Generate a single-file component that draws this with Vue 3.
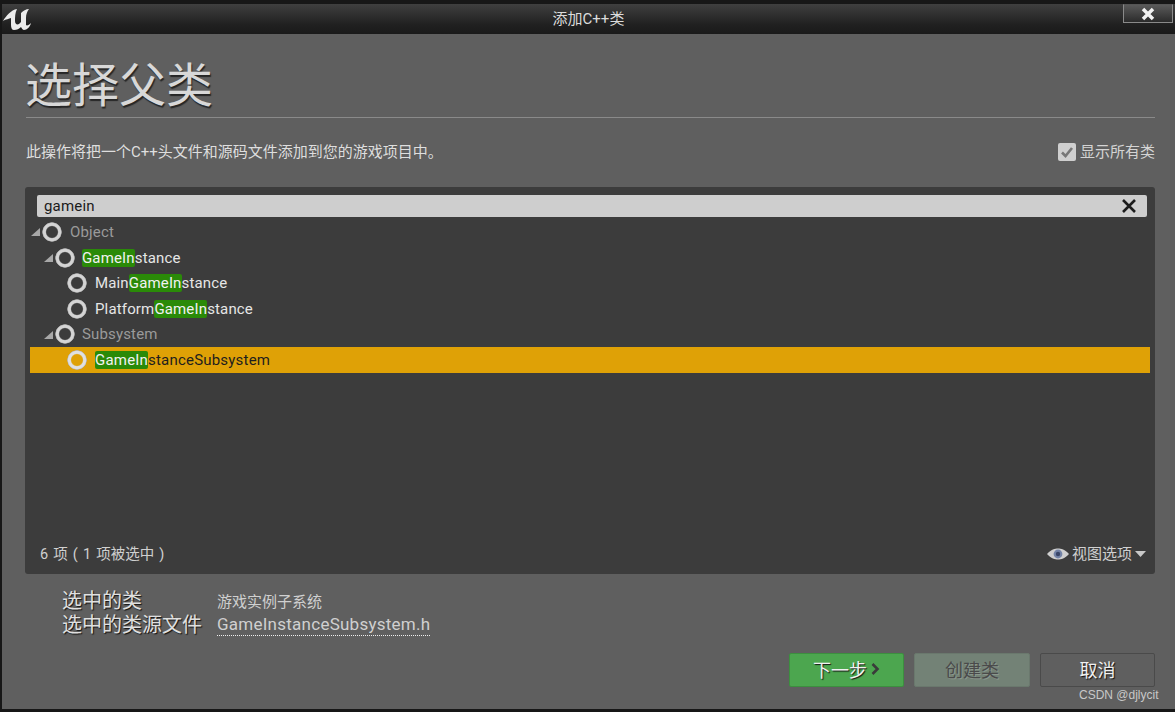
<script setup>
const rows = [
  { depth: 0, arrow: true, parts: [['Object', false]], dim: true },
  { depth: 1, arrow: true, parts: [['GameIn', true], ['stance', false]] },
  { depth: 2, parts: [['Main', false], ['GameIn', true], ['stance', false]] },
  { depth: 2, parts: [['Platform', false], ['GameIn', true], ['stance', false]] },
  { depth: 1, arrow: true, parts: [['Subsystem', false]], dim: true },
  { depth: 2, parts: [['GameIn', true], ['stanceSubsystem', false]], selected: true },
]
</script>

<template>
  <div class="window">
    <header class="titlebar">
      <svg class="logo" width="32" height="32" viewBox="2 4 32 32">
        <path d="M3 21C6 16 11 10 17 9C15 13 15 17 15 21C15 24 17 25 19 24L21 22L21 13C23 11 26 9 29 9C27 12 26 14 26 18L26 25C27 26 29 25 31 23C30 27 27 30 24 30C23 30 22 29 21 27C19 29 17 30 14 30C12 30 11 28 11 25L11 18C9 19 6 19 3 21Z" fill="#ececec"/>
      </svg>
      <span class="wintitle">添加C++类</span>
      <button class="close" type="button">
        <svg width="14" height="14" viewBox="0 0 14 14"><path d="M2 2L12 12M12 2L2 12" stroke="#f2f2f2" stroke-width="3.5"/></svg>
      </button>
    </header>

    <main class="body">
      <h1 class="heading">选择父类</h1>
      <div class="rule"></div>
      <div class="desc-row">
        <p class="desc">此操作将把一个C++头文件和源码文件添加到您的游戏项目中。</p>
        <label class="show-all">
          <span class="check">
            <svg width="14" height="12" viewBox="0 0 14 12"><path d="M2 6.5L5.5 10L12 2" fill="none" stroke="#777" stroke-width="2.6"/></svg>
          </span>
          显示所有类
        </label>
      </div>

      <section class="panel">
        <div class="search">
          <span>gamein</span>
          <svg width="16" height="16" viewBox="0 0 16 16"><path d="M2 2L14 14M14 2L2 14" stroke="#1c1c1c" stroke-width="2.6"/></svg>
        </div>
        <div class="tree">
          <div v-for="(r, i) in rows" :key="i" class="row" :class="{ selected: r.selected, dim: r.dim }">
            <div class="indent" :class="'d' + r.depth">
              <svg v-if="r.arrow" class="arrow" width="9" height="8" viewBox="0 0 9 8"><path d="M9 0V8H0Z" fill="#a8a8a8"/></svg>
            </div>
            <span class="ring"></span>
            <span class="label" :class="'m' + r.depth">
              <span v-for="(p, j) in r.parts" :key="j" :class="{ hit: p[1] }">{{ p[0] }}</span>
            </span>
          </div>
        </div>
        <div class="status">
          <span class="count">6 项 ( 1 项被选中 )</span>
          <span class="view">
            <svg width="22" height="12" viewBox="0 0 22 12">
              <path d="M0 6C4 1.5 8 0.5 11 0.5C14 0.5 18 1.5 22 6C18 10.5 14 11.5 11 11.5C8 11.5 4 10.5 0 6Z" fill="#cfcfcf"/>
              <circle cx="11" cy="6" r="4.4" fill="#7484a8"/>
              <circle cx="11" cy="6" r="2.2" fill="#3a4668"/>
            </svg>
            视图选项
            <svg width="11" height="6" viewBox="0 0 11 6"><path d="M0 0H11L5.5 6Z" fill="#c8c8c8"/></svg>
          </span>
        </div>
      </section>

      <section class="details">
        <div class="dt">选中的类</div>
        <div class="dd small">游戏实例子系统</div>
        <div class="dt">选中的类源文件</div>
        <div class="dd link">GameInstanceSubsystem.h</div>
      </section>

      <footer class="actions">
        <button class="btn next" type="button">下一步
          <svg width="9" height="12" viewBox="0 0 9 12"><path d="M1.5 1L6.5 6L1.5 11" fill="none" stroke="#3a3a3a" stroke-width="2.6"/></svg>
        </button>
        <button class="btn create" type="button">创建类</button>
        <button class="btn cancel" type="button">取消</button>
      </footer>
    </main>
    <span class="mark">CSDN @djlycit</span>
  </div>
</template>

<style>
html, body { margin: 0; background: #161616; overflow: hidden; }
</style>

<style scoped>
* { box-sizing: border-box; }
.window {
  position: relative;
  width: 1175px;
  height: 712px;
  padding: 4px 0 3px 2px;
  display: flex;
  flex-direction: column;
  background: #171717;
  font-family: Roboto, "Noto Sans CJK SC", sans-serif;
  color: #d6d6d6;
}
.titlebar {
  height: 30px;
  flex: none;
  display: flex;
  align-items: flex-start;
  justify-content: center;
  position: relative;
  background: linear-gradient(#3f3f3f, #202020 70%, #1a1a1a);
}
.logo { position: absolute; left: 0; top: 0; }
.wintitle { font-size: 15px; line-height: 30px; color: #dcdcdc; }
.close {
  position: absolute;
  right: 2px;
  top: 0;
  width: 50px;
  height: 19px;
  padding: 0;
  display: flex;
  align-items: center;
  justify-content: center;
  background: linear-gradient(#5a5a5a, #2b2b2b);
  border: 1px solid #8a8a8a;
  border-top-color: #555;
  border-radius: 0;
}
.body {
  flex: 1;
  min-height: 0;
  display: flex;
  flex-direction: column;
  padding: 0 20px 22px 23px;
  background: #5f5f5f;
}
.heading {
  margin: 22px 0 0 0;
  height: 60px;
  font-size: 47px;
  line-height: 60px;
  font-weight: 400;
  color: #d8d8d8;
  text-shadow: 1px 2px 1px #262626;
}
.rule { height: 1px; margin: 1px 0 0 1px; background: #8a8a8a; }
.desc-row {
  height: 69px;
  display: flex;
  justify-content: space-between;
  align-items: flex-start;
  padding: 24px 0 0 1px;
}
.desc { margin: 0; font-size: 15px; line-height: 20px; color: #dedede; }
.show-all {
  display: flex;
  align-items: center;
  gap: 4px;
  font-size: 15px;
  line-height: 20px;
  color: #d4d4d4;
}
.check {
  width: 18px;
  height: 18px;
  display: flex;
  align-items: center;
  justify-content: center;
  background: #cfcfcf;
  border-radius: 2px;
}
.panel {
  height: 387px;
  flex: none;
  display: flex;
  flex-direction: column;
  padding: 8px 5px 0;
  background: #3c3c3c;
  border-radius: 3px;
}
.search {
  flex: none;
  height: 22px;
  margin: 0 3px 0 7px;
  padding: 0 10px 0 7px;
  display: flex;
  align-items: center;
  justify-content: space-between;
  background: #cecece;
  border-radius: 2px;
  color: #1b1b1b;
  font-size: 15px;
  letter-spacing: 0.2px;
}
.tree { flex: 1; padding-top: 2.2px; }
.row {
  height: 25.6px;
  display: flex;
  align-items: center;
  font-size: 15px;
  letter-spacing: 0.15px;
  color: #e6e6e6;
}
.row.dim { color: #9a9a9a; }
.row.selected { background: #dfa106; color: #1e1e1e; letter-spacing: 0.2px; }
.indent { position: relative; flex: none; height: 100%; }
.d0 { width: 12px; }
.d1 { width: 25px; }
.d2 { width: 37px; }
.arrow { position: absolute; right: 2px; top: 9px; }
.ring {
  flex: none;
  width: 20px;
  height: 20px;
  border-radius: 50%;
  background: radial-gradient(circle closest-side, transparent 5.4px, #d4d4d4 6.6px, #d4d4d4 8.6px, #a0a0a0 9.6px, transparent 10px);
}
.row.selected .ring {
  background: radial-gradient(circle closest-side, transparent 5.4px, #e0e0e0 6.6px, #e0e0e0 8.6px, #b8b8b8 9.6px, transparent 10px);
}
.label { white-space: nowrap; }
.m0, .m2 { margin-left: 8px; }
.m1 { margin-left: 7px; }
.hit {
  display: inline-block;
  background: #2a8a08;
  border-radius: 2px;
  line-height: 18px;
  color: #f2f2f2;
}
.status {
  flex: none;
  height: 30px;
  display: flex;
  justify-content: space-between;
  align-items: flex-start;
  padding: 0 4px 0 10px;
  font-size: 15px;
  line-height: 20px;
  color: #d0d0d0;
}
.count { font-size: 14.5px; word-spacing: 1.5px; padding-top: 1px; }
.view { display: flex; align-items: center; gap: 3px; }
.details {
  display: grid;
  grid-template-columns: 155px 1fr;
  margin: 15px 0 0 37px;
  grid-auto-rows: 24px;
  align-items: center;
}
.dt { font-size: 20px; line-height: 24px; color: #e0e0e0; text-shadow: 1px 1px 1px #111; white-space: nowrap; }
.dd { font-size: 15px; color: #d0d0d0; }
.dd.small { font-size: 15px; padding-bottom: 2px; }
.dd.link {
  justify-self: start;
  font-size: 17px;
  letter-spacing: 0.25px;
  line-height: 21px;
  border-bottom: 1px dotted #eee;
}
.actions {
  margin-top: auto;
  display: flex;
  justify-content: flex-end;
  gap: 10px;
}
.btn {
  width: 115px;
  height: 34px;
  padding: 0 0 2px;
  display: flex;
  align-items: center;
  justify-content: center;
  gap: 4px;
  border-radius: 2px;
  font-family: inherit;
  font-size: 18px;
  text-shadow: 1px 1px 1px #111;
}
.next { background: #4ca64f; border: 1px solid #3c8f3f; color: #f2f2f2; }
.create { width: 116px; background: #738276; border: 1px solid #6a786d; color: #4a4a4a; text-shadow: 1px 1px 0 #8a978c; }
.cancel { background: #5f5f5f; border: 1px solid #4a4a4a; color: #f0f0f0; }
.mark {
  position: absolute;
  left: 1079px;
  top: 688px;
  font-size: 12px;
  line-height: 15px;
  font-family: "Liberation Sans", sans-serif;
  color: #c8c8c8;
}
</style>
